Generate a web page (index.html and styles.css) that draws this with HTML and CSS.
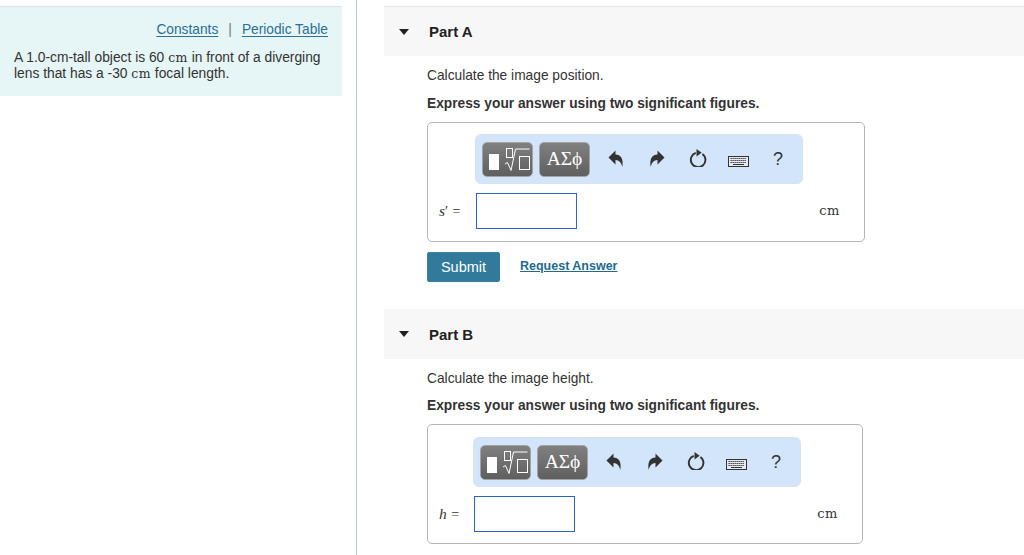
FILE: index.html
```html
<!DOCTYPE html>
<html lang="en">
<head>
<meta charset="utf-8">
<title>Lens problem</title>
<link rel="stylesheet" href="styles.css">
</head>
<body>
<svg class="defs" width="0" height="0" aria-hidden="true">
  <symbol id="tpl" viewBox="0 0 51 35"><rect x="7" y="12" width="10" height="16" fill="#fff"/><g fill="none" stroke="#fff"><rect x="24.5" y="6.5" width="6" height="9"/><path d="M23 22l2.500-1.500 3.500 8 4.500-21.500h14"/><rect x="37.500" y="14.500" width="10" height="13"/></g></symbol>
  <symbol id="undo" viewBox="0 0 16 18"><path d="M0.500 7.500 7.500 0.500v4c5 0 8.300 4 6.800 12.500-.8-4-3-7-6.800-7v4.500z"/></symbol>
  <symbol id="redo" viewBox="0 0 16 18"><path d="M15.500 7.500 8.500 0.500v4c-5 0-8.300 4-6.800 12.500.8-4 3-7 6.800-7v4.500z"/></symbol>
  <symbol id="reset" viewBox="0 0 18 18"><path d="M6.800 3.900a7.300 7.300 0 1 0 6.600 1" fill="none" stroke="currentColor" stroke-width="1.900"/><path d="M7.500 0v7.600l5.200-3.800z"/></symbol>
  <symbol id="keys" viewBox="0 0 21 11"><rect x=".5" y=".5" width="20" height="10" fill="#e4eaf0" stroke="currentColor"/><path d="M2.500 2.500h16M2.500 4.500h16M2.500 6.500h16" stroke="currentColor" stroke-dasharray="1.300 .7" fill="none"/><path d="M5 8.500h11" stroke="currentColor" fill="none"/></symbol>
</svg>
<div class="page">
  <aside class="intro">
    <div class="intro-box">
      <p class="links"><a href="#">Constants</a><span class="sep">|</span><a href="#">Periodic Table</a></p>
      <p class="problem">A 1.0-cm-tall object is 60 <span class="unit">cm</span> in front of a diverging lens that has a -30 <span class="unit">cm</span> focal length.</p>
    </div>
  </aside>
  <main class="parts">
    <section class="part part-a">
      <h2 class="part-head"><span class="caret"></span>Part A</h2>
      <p class="prompt">Calculate the image position.</p>
      <p class="hint">Express your answer using two significant figures.</p>
      <div class="answer">
        <div class="toolbar">
          <button class="tool"><svg class="tpl"><use href="#tpl"/></svg></button>
          <button class="tool greek">ΑΣϕ</button>
          <span class="icons">
            <svg class="ic"><use href="#undo"/></svg>
            <svg class="ic"><use href="#redo"/></svg>
            <svg class="ic ic-reset"><use href="#reset"/></svg>
            <svg class="ic ic-keys"><use href="#keys"/></svg>
            <span class="help">?</span>
          </span>
        </div>
        <div class="entry">
          <span class="label"><i>s</i>′ =</span>
          <span class="field"></span>
          <span class="unit-end">cm</span>
        </div>
      </div>
      <div class="actions">
        <button class="submit">Submit</button>
        <a class="request" href="#">Request Answer</a>
      </div>
    </section>
    <section class="part part-b">
      <h2 class="part-head"><span class="caret"></span>Part B</h2>
      <p class="prompt">Calculate the image height.</p>
      <p class="hint">Express your answer using two significant figures.</p>
      <div class="answer">
        <div class="toolbar">
          <button class="tool"><svg class="tpl"><use href="#tpl"/></svg></button>
          <button class="tool greek">ΑΣϕ</button>
          <span class="icons">
            <svg class="ic"><use href="#undo"/></svg>
            <svg class="ic"><use href="#redo"/></svg>
            <svg class="ic ic-reset"><use href="#reset"/></svg>
            <svg class="ic ic-keys"><use href="#keys"/></svg>
            <span class="help">?</span>
          </span>
        </div>
        <div class="entry">
          <span class="label"><i>h</i> =</span>
          <span class="field"></span>
          <span class="unit-end">cm</span>
        </div>
      </div>
    </section>
  </main>
</div>
</body>
</html>
```
FILE: styles.css
```css
* { box-sizing: border-box; }
html, body { margin: 0; height: 555px; overflow: hidden; background: #fff; }
body { font-family: "Liberation Sans", Arial, sans-serif; color: #333; font-size: 13.750px; }
.defs { position: absolute; }
.page { display: flex; height: 555px; padding-top: 6px; }
.intro { width: 357px; flex: none; border-right: 1px solid #b9cde0; margin-top: -6px; padding: 6px 14px 0 0; }
.intro-box { width: 342px; height: 90px; background: #e6f5f5; border-top: 1px solid #e0e3e3; padding: 14px 14px 0 14px; }
.links { margin: 0 0 12px; text-align: right; line-height: 17px; }
.links a { color: #2a7097; text-decoration: underline; text-underline-offset: 2px; }
.sep { color: #777; margin: 0 10px; }
.problem { margin: 0; line-height: 16px; color: #333; font-size: 13.800px; }
.unit { display: inline-block; font-family: "DejaVu Serif", serif; font-size: 12.500px; letter-spacing: .4px; line-height: 14px; }
.parts { flex: 1; margin-left: 27px; border-top: 1px solid #e6e6e6; }
.part-head { display: flex; align-items: center; margin: 0; height: 49px; background: #f7f7f7; font-size: 15px; font-weight: bold; color: #222; padding-left: 15px; }
.caret { width: 0; height: 0; border: 5.500px solid transparent; border-top: 6px solid #222; border-bottom: 0; margin-right: 20px; }
.prompt { margin: 11px 0 0 43px; line-height: 17px; }
.hint { margin: 11px 0 0 43px; line-height: 17px; font-weight: bold; color: #333; }
.part-b .part-head { height: 50px; }
.part-b .hint { margin-top: 10px; }
.answer { margin: 10px 0 0 43px; width: 438px; height: 120px; border: 1px solid #b5b5b5; border-radius: 5px; padding-top: 11px; }
.part-b .answer { width: 436px; height: 120px; padding-top: 12px; }
.toolbar { display: flex; align-items: center; margin-left: 47px; width: 328px; height: 50px; background: #d2e5fb; border: 1px solid #dbe3ea; border-radius: 6px; padding-left: 6px; gap: 6px; }
.part-b .toolbar { margin-left: 45px; }
.tool { display: flex; align-items: center; justify-content: center; flex: none; width: 51px; height: 35px; padding: 0; border: 1px solid #a3a3a3; border-radius: 5px; background: linear-gradient(#808080, #5f5f5f); color: #fff; }
.greek { font-family: "Liberation Serif", serif; font-size: 19.500px; }
.tpl { width: 51px; height: 35px; flex: none; }
.icons { display: flex; align-items: center; color: #333; margin-left: 12px; }
.ic { width: 16px; height: 18px; fill: #333; margin-right: 25px; }
.ic-reset { width: 18px; height: 18px; margin: -2px 21px 0 -1px; }
.ic-keys { width: 21px; height: 11px; margin: 4px 0 0 0; }
.help { font-size: 18px; margin-left: 24px; }
.entry { display: flex; align-items: center; margin-top: 8px; height: 37px; }
.label { width: 48px; padding-left: 11px; font: 14px "Liberation Serif", serif; word-spacing: 1px; color: #333; white-space: nowrap; }
.part-b .label { width: 46px; }
.label i { font-size: 15.500px; }
.field { width: 101px; height: 36px; border: 1px solid #2a64c8; background: #fff; }
.unit-end { margin-left: auto; margin-right: 24px; font-family: "DejaVu Serif", serif; font-size: 13px; letter-spacing: .6px; color: #333; }
.actions { display: flex; align-items: center; margin: 9px 0 0 43px; height: 31px; gap: 20px; }
.submit { width: 73px; height: 30px; padding: 0; background: #327a9b; border: 1px solid #3a7f9f; border-radius: 2px; color: #fff; font: 14.500px "Liberation Sans", sans-serif; }
.request { color: #1f6a90; font-size: 12.500px; font-weight: bold; text-decoration: underline; text-underline-offset: 1px; margin-top: -2px; }
.part-b { margin-top: 27px; }
```
